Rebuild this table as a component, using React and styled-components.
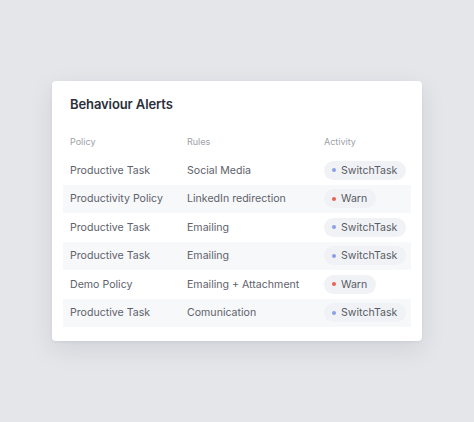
import React from 'react';
import styled, {createGlobalStyle} from 'styled-components'

const GlobalStyle = createGlobalStyle`
  html, body {
    margin: 0;
    padding: 0;
    background: #e5e6ea;
    font-family: Inter, "Noto Sans", sans-serif;
  }
`
const Page = styled.div`
  width: 474px;
  height: 422px;
  box-sizing: border-box;
  padding: 81px 0 0 52px;
`
const Card = styled.div`
  width: 370px;
  height: 260px;
  box-sizing: border-box;
  background: #ffffff;
  border-radius: 4px;
  box-shadow: 0 8px 24px rgba(40, 44, 60, 0.10), 0 1px 3px rgba(40, 44, 60, 0.06);
  padding: 13px 11px 15px 11px;
`
const Title = styled.div`
  font-size: 13px;
  font-weight: 600;
  color: #2b303b;
  line-height: 20px;
  padding-left: 7px;
  letter-spacing: -0.1px;
`
const Table = styled.div`
  margin-top: 12px;
  display: flex;
  flex-direction: column;
`
const Row = styled.div`
  display: grid;
  grid-template-columns: 117px 137px 1fr;
  align-items: center;
  height: ${p => p.$header ? '30px' : '28.5px'};
  padding-left: 7px;
  background: ${p => p.$striped ? '#f7f8fa' : 'transparent'};
  font-size: ${p => p.$header ? '9px' : '10.6px'};
  color: ${p => p.$header ? '#9da1a9' : '#5e626b'};
`
const Cell = styled.div`
  white-space: nowrap;
`
const Badge = styled.div`
  display: inline-flex;
  align-items: center;
  gap: 5px;
  height: 19px;
  padding: 0 9px 0 8px;
  border-radius: 10px;
  background: #f1f2f5;
  color: #585d66;
  justify-self: start;
`
const Dot = styled.span`
  width: 4px;
  height: 4px;
  border-radius: 50%;
  background: ${p => p.$warn ? '#e8634f' : '#8c9fe6'};
`

const rows = [
  ['Productive Task', 'Social Media', 'SwitchTask'],
  ['Productivity Policy', 'LinkedIn redirection', 'Warn'],
  ['Productive Task', 'Emailing', 'SwitchTask'],
  ['Productive Task', 'Emailing', 'SwitchTask'],
  ['Demo Policy', 'Emailing + Attachment', 'Warn'],
  ['Productive Task', 'Comunication', 'SwitchTask'],
]

const App = () => {
  return (
    <>
      <GlobalStyle/>
      <Page>
        <Card>
          <Title>Behaviour Alerts</Title>
          <Table>
            <Row $header>
              <Cell>Policy</Cell>
              <Cell>Rules</Cell>
              <Cell>Activity</Cell>
            </Row>
            {rows.map(([policy, rule, activity], i) => (
              <Row key={i} $striped={i % 2 === 1}>
                <Cell>{policy}</Cell>
                <Cell>{rule}</Cell>
                <Badge><Dot $warn={activity === 'Warn'}/>{activity}</Badge>
              </Row>
            ))}
          </Table>
        </Card>
      </Page>
    </>
  );
};

export default App;
